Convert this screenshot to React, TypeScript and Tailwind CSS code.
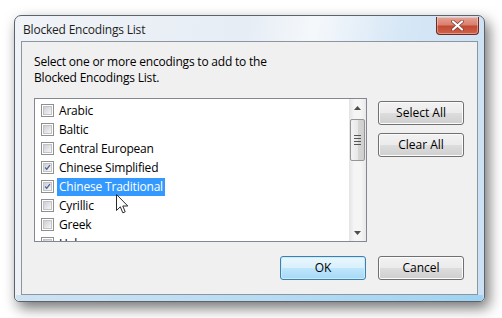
const encodings = [
  { name: 'Arabic', checked: false },
  { name: 'Baltic', checked: false },
  { name: 'Central European', checked: false },
  { name: 'Chinese Simplified', checked: true },
  { name: 'Chinese Traditional', checked: true, selected: true },
  { name: 'Cyrillic', checked: false },
  { name: 'Greek', checked: false },
  { name: 'Hebrew', checked: false },
];

function CheckBox({ checked }: { checked: boolean }) {
  return (
    <span className="flex h-[13px] w-[13px] shrink-0 items-center justify-center border border-[#8e8f8f] bg-white">
      <span className="flex h-[9px] w-[9px] items-center justify-center border border-[#c3c3c3] bg-gradient-to-br from-[#cbcfd5] to-[#f6f6f6]">
        {checked ? (
          <svg width="9" height="9" viewBox="0 0 9 9">
            <path d="M1.5 4.5 L3.5 6.8 L7.6 1.4" fill="none" stroke="#4a5f97" strokeWidth="1.6" />
          </svg>
        ) : null}
      </span>
    </span>
  );
}

function VistaButton({ label, isDefault = false }: { label: string; isDefault?: boolean }) {
  return (
    <button
      className={
        isDefault
          ? 'relative h-[24px] w-[86px] rounded-[3px] border border-[#3c7fb1] bg-[linear-gradient(#eaf6fd_0%,#d9f0fc_50%,#bee6fd_51%,#a7d9f5_100%)] text-[12px] text-black shadow-[inset_0_0_0_1px_#c9ecfb]'
          : 'relative h-[24px] w-[86px] rounded-[3px] border border-[#707070] bg-[linear-gradient(#f2f2f2_0%,#ebebeb_50%,#dddddd_51%,#cfcfcf_100%)] text-[12px] text-black shadow-[inset_0_0_0_1px_#fcfcfc]'
      }
    >
      {label}
    </button>
  );
}

function Cursor() {
  return (
    <svg className="absolute left-[116px] top-[194px]" width="13" height="21" viewBox="0 0 13 21">
      <path
        d="M0.5 0.5 L0.5 16.5 L4.3 12.8 L6.8 18.8 L9.2 17.8 L6.8 12 L11.8 12 Z"
        fill="#ffffff"
        stroke="#2b2b2b"
        strokeWidth="1"
        strokeLinejoin="round"
      />
    </svg>
  );
}

export default function App() {
  return (
    <div
      className="relative h-[318px] w-[502px] overflow-hidden bg-white pl-[14px] pt-[15px]"
      style={{ fontFamily: '"Open Sans", "Noto Sans", sans-serif' }}
    >
      <div className="relative flex h-[287px] w-[471px] flex-col rounded-t-[7px] rounded-b-[5px] border border-[#5b636c] bg-[linear-gradient(100deg,#f0f3f7_0%,#e6edf5_45%,#f5f8fb_58%,#d6e7f6_75%,#cbe0f3_100%)] shadow-[4px_6px_14px_rgba(0,0,0,0.55)]">
        {/* title bar */}
        <div className="flex h-[25px] items-center pl-[8px] pt-[2px]">
          <span className="text-[12px] tracking-[-0.2px] text-[#1e1e1e]">Blocked Encodings List</span>
        </div>
        <div className="absolute right-[5px] top-[1px] flex h-[18px] w-[43px] items-center justify-center rounded-b-[4px] border border-t-0 border-[#6d2a22] bg-[linear-gradient(#e8a393_0%,#d98070_45%,#c24a33_55%,#d1624a_100%)] shadow-[inset_0_0_0_1px_rgba(255,255,255,0.35)]">
          <svg width="13" height="11" viewBox="0 0 13 11">
            <path d="M2 1.5 L11 9.5 M11 1.5 L2 9.5" stroke="#7a3a30" strokeWidth="3.6" strokeLinecap="round" />
            <path d="M2 1.5 L11 9.5 M11 1.5 L2 9.5" stroke="#ffffff" strokeWidth="2.2" strokeLinecap="round" />
          </svg>
        </div>

        {/* client area */}
        <div className="mx-[6px] flex h-[254px] flex-col border border-[#8c96a1] bg-[#f0f0f0] pl-[12px] pr-[13px] pt-[12px]">
          <p className="text-[12px] leading-[16px] tracking-[-0.2px] text-black">
            Select one or more encodings to add to the
            <br />
            Blocked Encodings List.
          </p>

          <div className="mt-[12px] flex gap-[11px]">
            <div className="flex h-[144px] w-[334px] overflow-hidden border border-[#828790] bg-white">
              <ul className="flex-1 overflow-hidden pl-[6px] pt-[2px]">
                {encodings.map((item) => (
                  <li key={item.name} className="flex h-[19px] items-center">
                    <CheckBox checked={item.checked} />
                    <span
                      className={
                        item.selected
                          ? 'ml-[3px] bg-[#3399ff] px-[2px] text-[12px] leading-[18px] tracking-[-0.2px] text-white'
                          : 'ml-[3px] px-[2px] text-[12px] leading-[18px] tracking-[-0.2px] text-black'
                      }
                    >
                      {item.name}
                    </span>
                  </li>
                ))}
              </ul>
              <div className="flex w-[17px] flex-col items-center bg-[#f0f0f0] bg-[linear-gradient(90deg,#e3e3e3,#f5f5f5_30%,#f5f5f5_70%,#e8e8e8)]">
                <div className="flex h-[17px] w-full items-center justify-center">
                  <svg width="7" height="4" viewBox="0 0 7 4">
                    <path d="M0 4 L3.5 0 L7 4 Z" fill="#4d4d4d" />
                  </svg>
                </div>
                <div className="mt-[3px] flex h-[42px] w-[15px] flex-col items-center justify-center gap-[2px] rounded-[2px] border border-[#959595] bg-[linear-gradient(90deg,#f3f3f3,#e8e8e8_50%,#d6d6d6_51%,#cfcfcf)]">
                  <span className="h-px w-[7px] bg-[#555]" />
                  <span className="h-px w-[7px] bg-[#555]" />
                  <span className="h-px w-[7px] bg-[#555]" />
                  <span className="h-px w-[7px] bg-[#555]" />
                </div>
                <div className="flex-1" />
                <div className="flex h-[17px] w-full items-center justify-center">
                  <svg width="7" height="4" viewBox="0 0 7 4">
                    <path d="M0 0 L3.5 4 L7 0 Z" fill="#4d4d4d" />
                  </svg>
                </div>
              </div>
            </div>

            <div className="mt-[3px] flex flex-col gap-[8px]">
              <VistaButton label="Select All" />
              <VistaButton label="Clear All" />
            </div>
          </div>

          <div className="mt-[14px] flex justify-end gap-[12px]">
            <VistaButton label="OK" isDefault />
            <VistaButton label="Cancel" />
          </div>
        </div>

        {/* bottom frame */}
        <div className="mx-[1px] mt-auto h-[6px] rounded-b-[4px] bg-[linear-gradient(90deg,#cfe2f2,#b9dcf3_50%,#9fd3f1)]" />
      </div>
      <Cursor />
    </div>
  );
}
